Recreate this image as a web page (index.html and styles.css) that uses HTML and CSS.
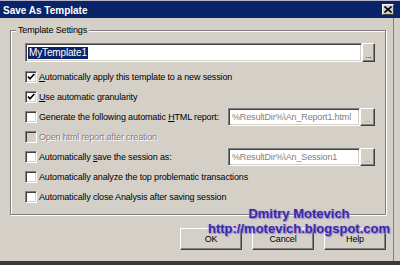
FILE: index.html
```html
<!DOCTYPE html>
<html>
<head>
<meta charset="utf-8">
<link rel="stylesheet" href="styles.css">
</head>
<body>
<div class="window">
  <div class="titlebar">
    <span class="title">Save As Template</span>
    <span class="close"><svg width="8" height="7" viewBox="0 0 8 7"><path d="M0.5 0.5 L7.5 6.5 M7.5 0.5 L0.5 6.5" stroke="#000" stroke-width="1.6" fill="none"/></svg></span>
  </div>
  <div class="main">
    <div class="group">
      <span class="legend">Template Settings</span>
      <div class="input-row">
        <div class="textbox"><span class="sel">MyTemplate1</span></div>
        <div class="browse">...</div>
      </div>
      <div class="row"><span class="cb"><svg width="10" height="10" viewBox="0 0 10 10"><path d="M2 4.5 L4 6.8 L8.3 2" stroke="#000" stroke-width="1.7" fill="none"/></svg></span><span class="label"><u>A</u>utomatically apply this template to a new session</span></div>
      <div class="row"><span class="cb"><svg width="10" height="10" viewBox="0 0 10 10"><path d="M2 4.5 L4 6.8 L8.3 2" stroke="#000" stroke-width="1.7" fill="none"/></svg></span><span class="label"><u>U</u>se automatic granularity</span></div>
      <div class="row"><span class="cb"></span><span class="label grow">Generate the following automatic <u>H</u>TML report:</span><div class="field">%ResultDir%\An_Report1.html</div><div class="browse dim">...</div></div>
      <div class="row disabled"><span class="cb off"></span><span class="label">Open html report after creation</span></div>
      <div class="row"><span class="cb"></span><span class="label grow">Automatically <u>s</u>ave the session as:</span><div class="field">%ResultDir%\An_Session1</div><div class="browse dim">...</div></div>
      <div class="row"><span class="cb"></span><span class="label">Automatically analyze the top problematic transactions</span></div>
      <div class="row"><span class="cb"></span><span class="label">Automatically close Analysis after saving session</span></div>
    </div>
    <div class="buttons">
      <div class="btn">OK</div>
      <div class="btn">Cancel</div>
      <div class="btn">Help</div>
    </div>
    <div class="watermark">Dmitry Motevich<br>http://motevich.blogspot.com</div>
  </div>
</div>
</body>
</html>
```
FILE: styles.css
```css
html, body {
  margin: 0;
  padding: 0;
}
body {
  width: 400px;
  height: 265px;
  overflow: hidden;
  background: #d4d0c8;
  font-family: "Liberation Sans", Arial, sans-serif;
  font-size: 9px;
  letter-spacing: -0.15px;
  color: #000;
}
.window {
  height: 265px;
  box-sizing: border-box;
  border-top: 1px solid #b8b4c8;
  border-bottom: 4px solid #3a3a3a;
  display: flex;
  flex-direction: column;
  position: relative;
}
.titlebar {
  height: 17px;
  background: #0a246a;
  display: flex;
  align-items: center;
  justify-content: space-between;
  padding: 0 6px 0 3px;
  flex-shrink: 0;
}
.title {
  color: #fff;
  font-weight: bold;
  font-size: 10px;
  letter-spacing: 0;
  padding-top: 1px;
}
.close {
  width: 12px;
  height: 11px;
  box-sizing: border-box;
  background: #d4d0c8;
  border-top: 1px solid #fff;
  border-left: 1px solid #fff;
  border-right: 1px solid #404040;
  border-bottom: 1px solid #404040;
  display: flex;
  align-items: center;
  justify-content: center;
}
.main {
  flex: 1;
  width: 394px;
  box-sizing: border-box;
  border-right: 1px solid #808080;
  display: flex;
  flex-direction: column;
  position: relative;
}
.group {
  position: relative;
  margin: 12px 0 0 10px;
  width: 376px;
  height: 185px;
  box-sizing: border-box;
  border: 1px solid #808080;
  box-shadow: inset 1px 1px 0 #fff, 1px 1px 0 #fff;
  padding: 12px 10px 0 14px;
  display: flex;
  flex-direction: column;
}
.legend {
  position: absolute;
  left: 5px;
  top: -7px;
  background: #d4d0c8;
  padding: 0 2px;
  line-height: 12px;
  color: #000;
}
.input-row {
  display: flex;
  height: 19px;
  margin-bottom: 5px;
}
.textbox {
  flex: 1;
  background: #fff;
  border-top: 1px solid #808080;
  border-left: 1px solid #808080;
  border-bottom: 1px solid #fff;
  border-right: 1px solid #fff;
  box-shadow: inset 1px 1px 0 #404040, inset -1px -1px 0 #d4d0c8;
  display: flex;
  align-items: center;
  padding-left: 2px;
}
.sel {
  background: #0a246a;
  color: #fff;
  font-size: 10px;
  line-height: 12px;
  padding: 0 1px;
}
.browse {
  width: 13px;
  box-sizing: border-box;
  background: #d4d0c8;
  border-top: 1px solid #fff;
  border-left: 1px solid #fff;
  border-right: 1px solid #404040;
  border-bottom: 1px solid #404040;
  box-shadow: inset -1px -1px 0 #808080;
  display: flex;
  align-items: flex-end;
  justify-content: center;
  font-size: 8px;
  line-height: 11px;
  letter-spacing: 0;
}
.browse.dim {
  width: 15px;
  color: #808080;
}
.row {
  display: flex;
  align-items: center;
  height: 20px;
}
.cb {
  width: 12px;
  height: 12px;
  box-sizing: border-box;
  background: #fff;
  border-top: 1px solid #808080;
  border-left: 1px solid #808080;
  border-bottom: 1px solid #fff;
  border-right: 1px solid #fff;
  box-shadow: inset 1px 1px 0 #404040, inset -1px -1px 0 #d4d0c8;
  display: flex;
  align-items: center;
  justify-content: center;
  margin-right: 2px;
  flex-shrink: 0;
}
.cb.off {
  background: #d4d0c8;
}
.label {
  white-space: nowrap;
}
.label u {
  text-decoration: underline;
}
.grow {
  flex: 1;
}
.disabled .label {
  color: #808080;
  text-shadow: 1px 1px 0 #fff;
}
.field {
  width: 132px;
  height: 18px;
  box-sizing: border-box;
  background: #fff;
  border-top: 1px solid #808080;
  border-left: 1px solid #808080;
  border-bottom: 1px solid #fff;
  border-right: 1px solid #fff;
  box-shadow: inset 1px 1px 0 #404040, inset -1px -1px 0 #d4d0c8;
  color: #808080;
  display: flex;
  align-items: center;
  padding-left: 3px;
  white-space: nowrap;
  overflow: hidden;
}
.row .browse {
  height: 18px;
}
.buttons {
  display: flex;
  justify-content: flex-end;
  gap: 10px;
  margin-top: 13px;
  padding-right: 7px;
}
.btn {
  width: 62px;
  height: 22px;
  box-sizing: border-box;
  border-top: 1px solid #fff;
  border-left: 1px solid #fff;
  border-right: 1px solid #404040;
  border-bottom: 1px solid #404040;
  box-shadow: inset -1px -1px 0 #808080;
  display: flex;
  align-items: center;
  justify-content: center;
}
.watermark {
  position: absolute;
  left: 199px;
  top: 188px;
  width: 200px;
  text-align: center;
  font-size: 13px;
  line-height: 15px;
  font-weight: bold;
  letter-spacing: 0;
  color: #3a289e;
  text-shadow: 0 0 2px #b0a4e4, 1px 1px 1px #8c7cca;
}
```
